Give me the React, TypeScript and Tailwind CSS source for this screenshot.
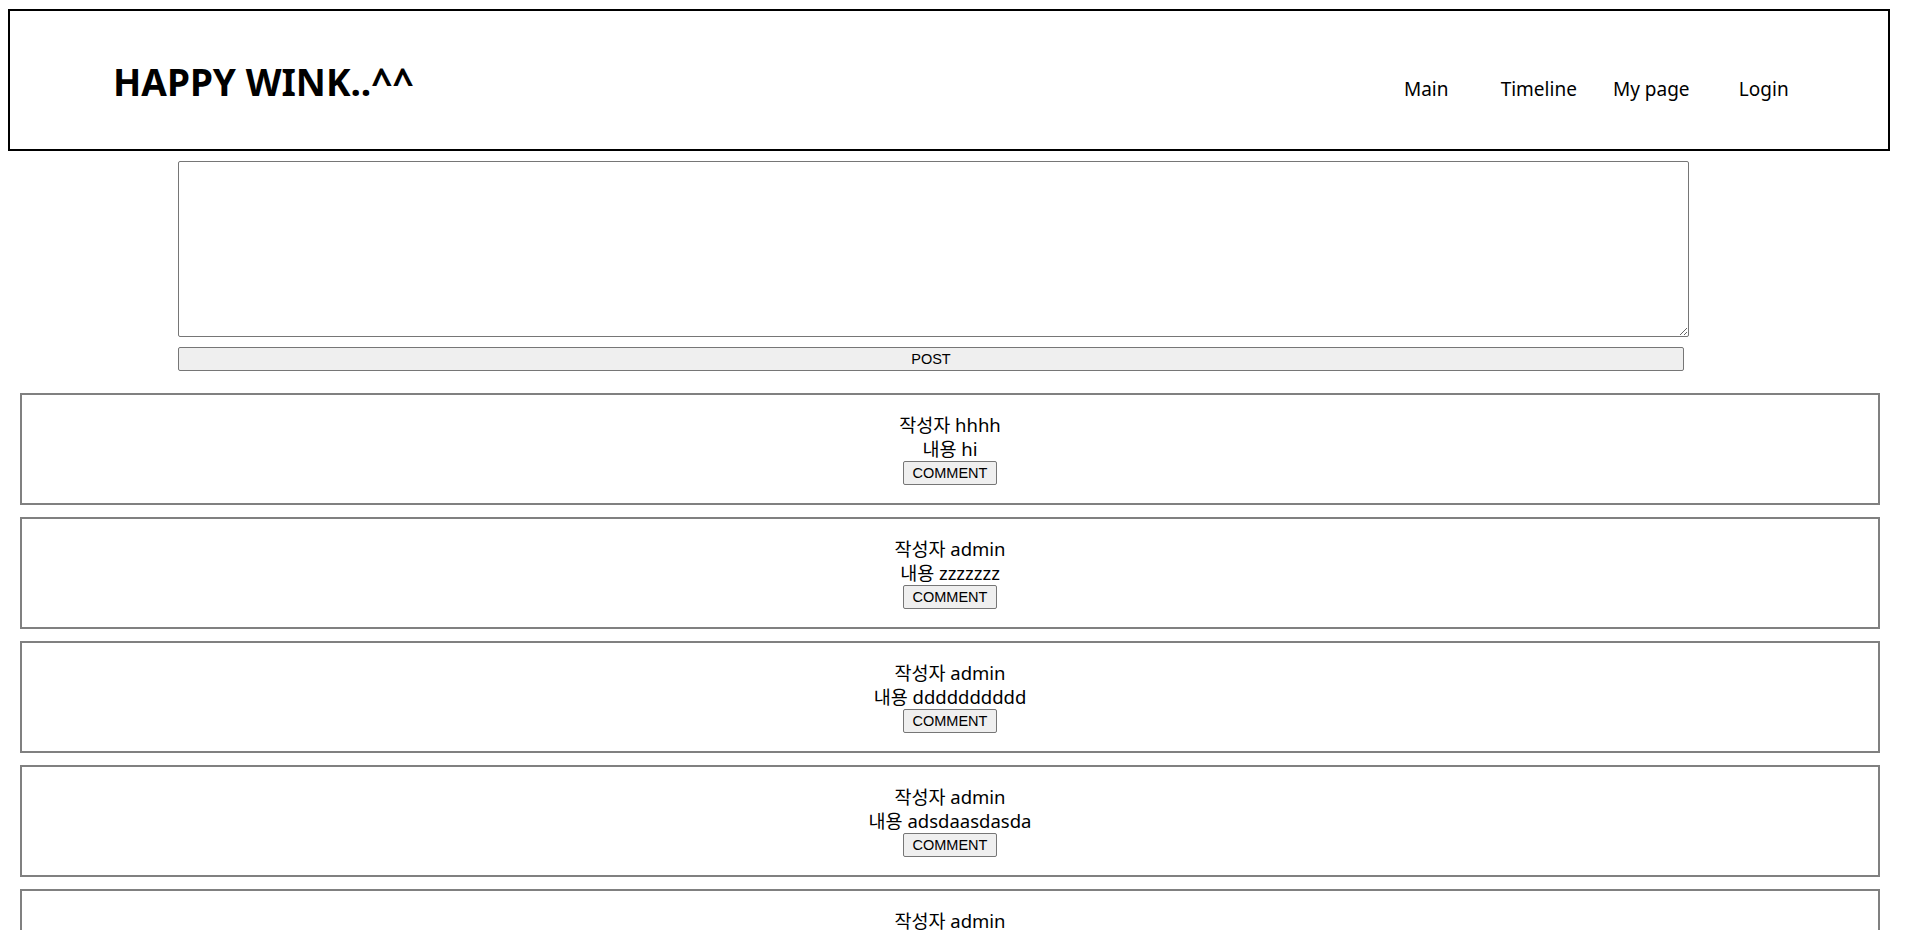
import { useState } from 'react';

interface Post {
    id: number;
    writer: string;
    content: string;
}

const initialPosts: Post[] = [
    { id: 1, writer: 'hhhh', content: 'hi' },
    { id: 2, writer: 'admin', content: 'zzzzzzz' },
    { id: 3, writer: 'admin', content: 'dddddddddd' },
    { id: 4, writer: 'admin', content: 'adsdaasdasda' },
    { id: 5, writer: 'admin', content: 'asdasd' },
    { id: 6, writer: 'admin', content: 'test' },
    { id: 7, writer: 'admin', content: 'hello' },
];

const navItems = ['Main', 'Timeline', 'My page', 'Login'];

function Header() {
    return (
        <header className="w-[1882px] h-[142px] border-2 border-black flex items-center pt-[3px] pl-[103px] pr-[68px]">
            <div className="w-full flex items-baseline justify-between">
                <h1 className="text-[37px] leading-[44px] font-bold text-black">HAPPY WINK..^^</h1>
                <nav className="flex">
                    {navItems.map((item) => (
                        <a key={item} href="#" className="w-[112.5px] text-center text-[19px] leading-[24px] text-black">
                            {item}
                        </a>
                    ))}
                </nav>
            </div>
        </header>
    );
}

function PostCard({ post }: { post: Post }) {
    return (
        <div className="w-[1860px] border-2 border-[#808080] py-[18px] flex flex-col items-center">
            <div className="text-[18.5px] leading-[24px] text-black">작성자 {post.writer}</div>
            <div className="text-[18.5px] leading-[24px] text-black">내용 {post.content}</div>
            <button className="h-[24px] px-[9px] text-[14.5px] leading-none bg-[#efefef] border border-[#767676] rounded-[2px] text-black [font-family:'Liberation_Sans',Arial,sans-serif]">
                COMMENT
            </button>
        </div>
    );
}

export default function App() {
    const [text, setText] = useState('');
    const [posts, setPosts] = useState(initialPosts);

    const handlePost = () => {
        if (!text.trim()) return;
        setPosts([{ id: Date.now(), writer: 'admin', content: text.trim() }, ...posts]);
        setText('');
    };

    return (
        <div className="min-h-screen bg-white pt-[9px] pl-[8px] pb-[40px] [font-family:'Noto_Sans','Noto_Sans_CJK_KR',sans-serif]">
            <Header />

            {/* Write form */}
            <div className="ml-[170px] mt-[10px] flex flex-col gap-[10px]">
                <textarea
                    value={text}
                    onChange={(e) => setText(e.target.value)}
                    className="block w-[1511px] h-[176px] border border-[#767676] rounded-[2px] outline-none p-[2px]"
                />
                <button
                    onClick={handlePost}
                    className="w-[1506px] h-[24px] text-[14.5px] leading-none bg-[#efefef] border border-[#767676] rounded-[2px] text-black [font-family:'Liberation_Sans',Arial,sans-serif]"
                >
                    POST
                </button>
            </div>

            {/* Posts */}
            <div className="ml-[12px] mt-[22px] flex flex-col gap-[12px]">
                {posts.map((post) => (
                    <PostCard key={post.id} post={post} />
                ))}
            </div>
        </div>
    );
}
